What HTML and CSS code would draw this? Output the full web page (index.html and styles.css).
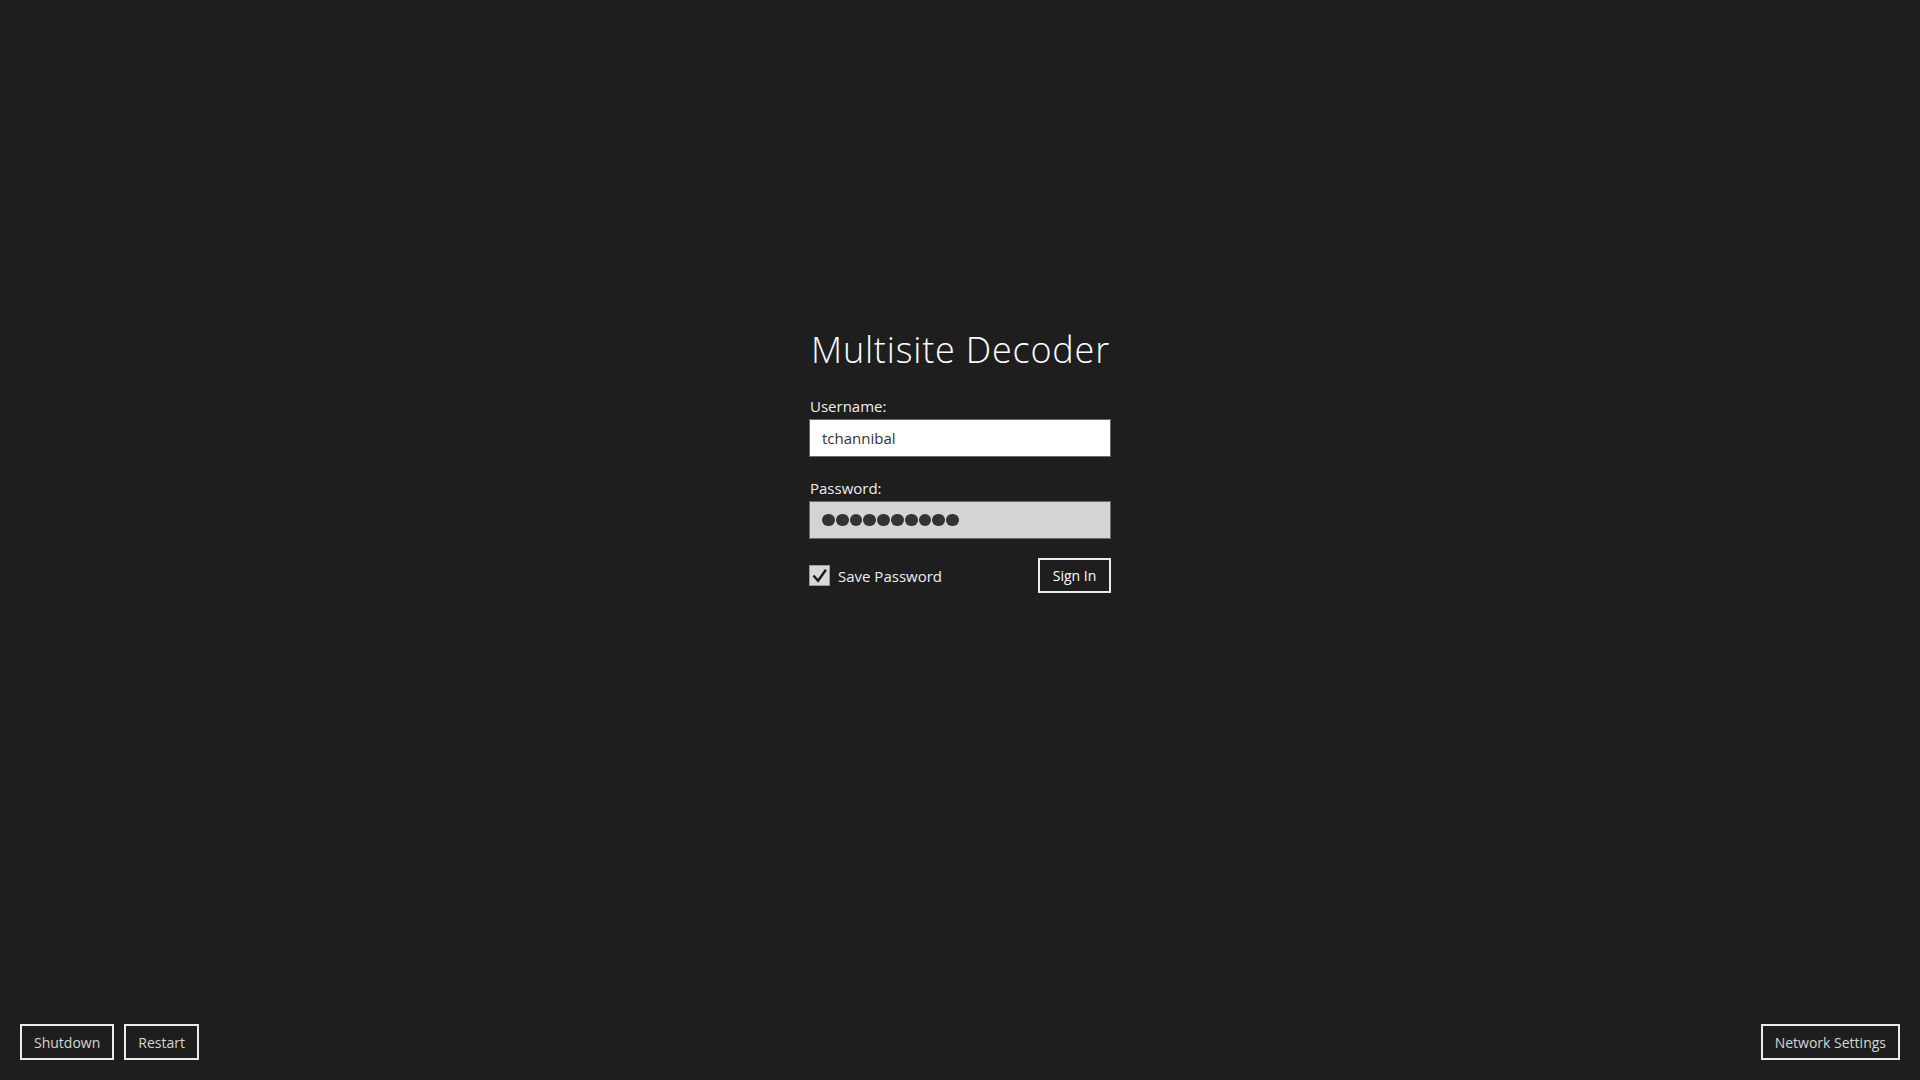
FILE: index.html
```html
<!DOCTYPE html>
<html lang="en">
<head>
<meta charset="utf-8">
<title>Multisite Decoder</title>
<link rel="stylesheet" href="styles.css">
</head>
<body>
<div class="screen">
  <main class="login-area">
    <form class="login">
      <h1 class="title">Multisite Decoder</h1>
      <div class="field">
        <label class="field-label">Username:</label>
        <div class="input input-user">tchannibal</div>
      </div>
      <div class="field">
        <label class="field-label">Password:</label>
        <div class="input input-pass">
          <span class="dot"></span><span class="dot"></span><span class="dot"></span><span class="dot"></span><span class="dot"></span><span class="dot"></span><span class="dot"></span><span class="dot"></span><span class="dot"></span><span class="dot"></span>
        </div>
      </div>
      <div class="actions">
        <label class="check">
          <span class="box">
            <svg viewBox="0 0 20 20" width="20" height="20"><path d="M4.5 10.5 L8.5 15 L16 4.5" fill="none" stroke="#1c1c1c" stroke-width="2.6" stroke-linecap="square" stroke-linejoin="miter"/></svg>
          </span>
          <span class="check-text">Save Password</span>
        </label>
        <button type="button" class="btn btn-sign">Sign In</button>
      </div>
    </form>
  </main>
  <footer class="bar">
    <div class="bar-group">
      <button type="button" class="btn">Shutdown</button>
      <button type="button" class="btn">Restart</button>
    </div>
    <button type="button" class="btn">Network Settings</button>
  </footer>
</div>
</body>
</html>
```
FILE: styles.css
```css
html, body {
  margin: 0;
  padding: 0;
  height: 100%;
  background: #1e1e1e;
}
body {
  font-family: "Open Sans", "Noto Sans", "Liberation Sans", sans-serif;
  color: #f0f0f0;
}
.screen {
  height: 100vh;
  display: flex;
  flex-direction: column;
}
.login-area {
  flex: 1;
  display: flex;
  justify-content: center;
  padding-top: 330px;
}
.login {
  width: 302px;
  display: flex;
  flex-direction: column;
}
.title {
  margin: 0 0 0 2px;
  font-size: 36px;
  font-weight: 300;
  line-height: 40px;
  color: #ffffff;
  white-space: nowrap;
  letter-spacing: 0.8px;
}
.field {
  display: flex;
  flex-direction: column;
}
.field-label {
  font-size: 15px;
  line-height: 20px;
  color: #eeeeee;
  margin-top: 26px;
  margin-bottom: 3px;
  margin-left: 1px;
}
.field + .field .field-label {
  margin-top: 21px;
}
.input {
  box-sizing: border-box;
  height: 38px;
  border: 1px solid #6a6a6a;
  display: flex;
  align-items: center;
  padding-left: 12px;
}
.input-user {
  background: #ffffff;
  color: #333333;
  font-size: 15px;
}
.input-pass {
  background: #d4d4d4;
  gap: 1px;
}
.dot {
  width: 12.8px;
  height: 12.8px;
  border-radius: 50%;
  background: #333333;
}
.actions {
  margin-top: 19px;
  display: flex;
  justify-content: space-between;
  align-items: center;
}
.check {
  display: flex;
  align-items: center;
  gap: 8px;
}
.box {
  box-sizing: border-box;
  width: 21px;
  height: 21px;
  background: #d8d8d8;
  border: 1px solid #9a9a9a;
  display: flex;
  align-items: center;
  justify-content: center;
}
.check-text {
  font-size: 15px;
  color: #eeeeee;
}
.btn {
  box-sizing: border-box;
  height: 36px;
  padding: 0 12px;
  background: transparent;
  border: 2px solid #ececec;
  color: #d6d6d6;
  font-family: inherit;
  font-size: 14px;
}
.btn-sign {
  width: 73px;
  height: 35px;
  padding: 0;
  color: #ffffff;
}
.bar {
  display: flex;
  justify-content: space-between;
  align-items: flex-end;
  padding: 0 20px 20px 20px;
}
.bar-group {
  display: flex;
  gap: 10px;
}
```
